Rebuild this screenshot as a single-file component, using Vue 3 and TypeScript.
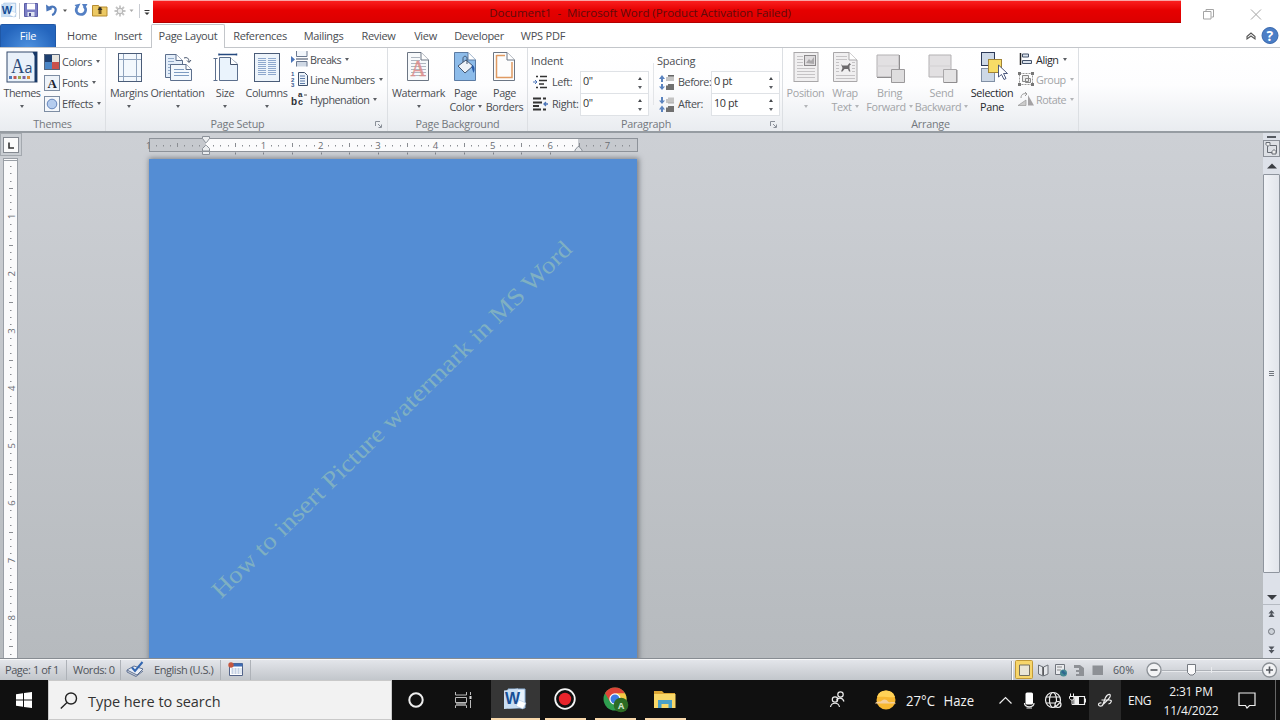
<script setup lang="ts">
interface Glyph { w: number; h: number; body: string }

const sheet = (fill: string, stroke: string) =>
  `<path d="M4.5 1.5H18L25.500 9V29.500H4.500Z" fill="${fill}" stroke="${stroke}"/><path d="M18 1.500V9H25.500" fill="#fff" stroke="${stroke}"/>`
const rows = (x1: number, x2: number, ys: number[], c: string) =>
  `<path d="${ys.map(y => `M${x1} ${y}H${x2}`).join('')}" stroke="${c}" fill="none"/>`

const wordLogo = `<path d="M4 1h17v19H4z" fill="#e8f1fb" stroke="#8fb4dc"/><path d="M0 2.500L14 0.500V20L0 21Z" fill="#c9def3"/><text x="1" y="16" font-family="Liberation Sans" font-size="16" font-weight="700" fill="#174f96" textLength="15" lengthAdjust="spacingAndGlyphs">W</text><path d="M15 12l7 3-3 6-7-3z" fill="#fff" stroke="#a9c4e2" stroke-width=".6"/>`

const glyphs: Record<string, Glyph> = {
  themes: { w: 32, h: 32, body: `<rect x="1" y="1" width="30" height="30" fill="#e9f1fa" stroke="#33486b"/><path d="M26.500 1H31v30h-2.500V5z" fill="#173867"/><text x="5" y="22" font-family="Liberation Serif" font-size="21" fill="#2b4a78" textLength="13" lengthAdjust="spacingAndGlyphs">A</text><text x="18.500" y="22" font-family="Open Sans" font-size="14" fill="#2b4a78" textLength="7.500" lengthAdjust="spacingAndGlyphs">a</text><g><path d="M3 25h3v3H3z" fill="#4d78b8"/><path d="M7.500 25h3v3h-3z" fill="#c2564f"/><path d="M12 25h3v3h-3z" fill="#97a851"/><path d="M16.500 25h3v3h-3z" fill="#7b63a0"/><path d="M21 25h3v3h-3z" fill="#d98c3c"/></g>` },
  colors: { w: 16, h: 16, body: `<path d="M0 0h8v8H0z" fill="#1e3f70"/><path d="M8 0h8v8H8z" fill="#e6e4de"/><path d="M0 8h8v8H0z" fill="#4b86c6"/><path d="M8 8h8v8H8z" fill="#c9504c"/><path d="M.5.5h15v15H.5z" fill="none" stroke="#56657c"/>` },
  fonts: { w: 16, h: 16, body: `<rect x=".5" y=".5" width="15" height="15" fill="#eef3f9" stroke="#7d8da3"/><text x="3.500" y="13" font-family="Liberation Serif" font-size="13" font-weight="700" fill="#1c2430">A</text>` },
  effects: { w: 16, h: 16, body: `<rect x=".5" y=".5" width="15" height="15" fill="#f4f7fb" stroke="#7d8da3"/><circle cx="8" cy="8" r="4.800" fill="#b4ccee" stroke="#6485bb"/>` },
  margins: { w: 32, h: 32, body: `<rect x="5.500" y="2.500" width="23" height="28" fill="#f3f8fd" stroke="#4a5c78"/><path d="M10.500 3v27M23.500 3v27M6 8.500h22M6 25.500h22" stroke="#8fa3bd" fill="none"/>` },
  orientation: { w: 32, h: 32, body: `<path d="M3.500 3.500H14L20.500 9.500V26.500H3.500Z" fill="#e4eefa" stroke="#5c6f8d"/><path d="M14 3.500V9.500H20.500" fill="#fff" stroke="#5c6f8d"/>${rows(6, 12, [7.5, 10.5], '#93abc9')}${rows(6, 17, [13.5, 16.5, 19.5, 22.5], '#93abc9')}<path d="M8.500 13.500H24L29.500 18.500V29.500H8.500Z" fill="#f3f8fd" stroke="#5c6f8d"/><path d="M24 13.500V18.500H29.500" fill="#fff" stroke="#5c6f8d"/>${rows(12, 22, [18.5], '#7d9bc1')}${rows(12, 27, [21.5, 24.5], '#7d9bc1')}<path d="M22 7c3-1 5 0 5 4M25 9.500l2 2 2-2.500" fill="none" stroke="#44536b"/>` },
  size: { w: 32, h: 32, body: `<path d="M10.500 6.500H21L28.500 13V29.500H10.500Z" fill="#eaf3fc" stroke="#5c6f8d"/><path d="M21.500 6.500V13.500H28.500" fill="#fff" stroke="#44536b"/><path d="M10 3.500H28M10 2.500v2M27.500 2.500v2" stroke="#25497f" fill="none" stroke-width="1.500"/><path d="M6.500 7V30M4.500 7.500h4M4.500 29.500h4" stroke="#5c6f8d" fill="none"/>` },
  columns: { w: 32, h: 32, body: `<rect x="3.500" y="2.500" width="25" height="28" fill="#edf4fb" stroke="#4a5c78"/>${rows(7, 15, [7.5, 9.5, 11.5, 13.5, 15.5, 17.5, 19.5, 21.5, 23.5], '#8ea8cd')}${rows(17, 25, [7.5, 9.5, 11.5, 13.5, 15.5, 17.5, 19.5, 21.5, 23.5], '#8ea8cd')}` },
  breaks: { w: 17, h: 16, body: `<path d="M0 5v7l4-3.500z" fill="#4a74b8"/><path d="M5.500 0v5.500h10.500V0" fill="#f2f6fb" stroke="#6b7990"/><path d="M5.500 15.500v-5h10.500v5" fill="#cfd8e4" stroke="#6b7990"/><path d="M5 8h12" stroke="#34435d"/>` },
  lines: { w: 17, h: 16, body: `<g font-family="Liberation Sans" font-size="6" font-weight="700" fill="#34568d"><text x="0" y="5">1</text><text x="0" y="10.500">2</text><text x="0" y="16">3</text></g><path d="M7.500 1.500h6l3 3v10h-9z" fill="#edf4fb" stroke="#3d4f6b"/>${rows(9, 14, [5, 7.5, 10, 12.5], '#5e7ba8')}` },
  hyphen: { w: 17, h: 16, body: `<g font-family="Liberation Sans" font-weight="700" fill="#2c2f36"><text x="0" y="14" font-size="10">b</text><text x="7" y="6" font-size="8">a</text><text x="7" y="14" font-size="9">c</text></g><path d="M13 4h3" stroke="#555"/>` },
  watermark: { w: 32, h: 32, body: `${sheet('#f7f9fb', '#6c7684')}${rows(8, 17, [6.5, 9.5], '#aeb6c0')}${rows(8, 23, [12.5, 15.5, 18.5, 21.5, 24.5], '#aeb6c0')}<text x="7.500" y="24.500" font-family="Liberation Serif" font-size="23" fill="#dd8c8a" stroke="#dd8c8a" stroke-width=".4" fill-opacity=".85" textLength="15" lengthAdjust="spacingAndGlyphs">A</text>` },
  pagecolor: { w: 32, h: 32, body: `${sheet('#8dbcea', '#5b7ba3')}<path d="M8 15l8-6 7 6-8 7z" fill="#eef3f8" stroke="#41546f"/><path d="M13 11V7.500c0-3 4-3 4 0V13" fill="none" stroke="#41546f"/><path d="M22 14c3 1 3 5 1.500 8l-2-6z" fill="#2a5ca8"/>` },
  borders: { w: 32, h: 32, body: `${sheet('#fdfdfd', '#6c7684')}<path d="M7.500 4.500h8.500M23 11v15.500H7.500V4" fill="none" stroke="#e09a62" stroke-width="1.500"/>` },
  indentLeft: { w: 15, h: 14, body: `<path d="M0 7h4M2 5l2 2-2 2" stroke="#4a74b8" fill="none"/><path d="M3 1.500h2M7 1.500h7M6 5.500h8M6 9h5M3 12.500h2M7 12.500h7" stroke="#333" stroke-width="1.600"/>` },
  indentRight: { w: 15, h: 14, body: `<path d="M0 1.500h8M10 1.500h3M0 5.500h9M0 9h6M0 12.500h8M10 12.500h3" stroke="#333" stroke-width="1.800"/><path d="M15 7h-4M13 5l-2 2 2 2" stroke="#4a74b8" fill="none" stroke-width="1.300"/>` },
  before: { w: 15, h: 15, body: `<path d="M3 0l3 4H4v3H2V4H0zM3 15l3-3.500H4V9H2v2.500H0z" fill="#5a83bf"/><path d="M7 2h2V.5h6V6H7z" fill="#c4c4c4"/><path d="M9 .8h6" stroke="#333"/><path d="M7 10.500h2V9h6v6H7z" fill="#707070"/>` },
  after: { w: 15, h: 15, body: `<path d="M3 7l3-3.500H4V0H2v3.500H0zM3 8.500l3 4H4V15H2v-2.500H0z" fill="#5a83bf"/><path d="M7 2h2V.5h6V6H7z" fill="#c4c4c4"/><path d="M9 6h6" stroke="#aaa"/><path d="M7 10.500h2V9h6v6H7z" fill="#707070"/>` },
  position: { w: 32, h: 32, body: `<rect x="4" y="1.500" width="24" height="29" fill="#f0eff0" stroke="#a9a7a9"/>${rows(7, 13, [5.5, 8.5, 11.500, 14.5], '#c5c3c5')}${rows(7, 25, [17.5, 20.5, 23.5, 26.5], '#c5c3c5')}<rect x="14.500" y="4.500" width="11" height="10" fill="#dedcde" stroke="#8b898b"/><path d="M16 12l3-4 2 2 3-4v7z" fill="#aaa8aa"/>` },
  wrap: { w: 32, h: 32, body: `<path d="M4.500 1.500H20L28 9V30.500H4.500Z" fill="#f0eff0" stroke="#a9a7a9"/><path d="M20 1.500V9H28" fill="#fff" stroke="#a9a7a9"/>${rows(7, 18, [5.5, 8.5], '#c5c3c5')}${rows(7, 10, [11.5, 14.5, 17.5, 20.5], '#c5c3c5')}${rows(23, 26, [11.5, 14.5, 17.5, 20.5], '#c5c3c5')}${rows(7, 26, [24.5, 27.5], '#c5c3c5')}<path d="M12 13l1.500 1.500h5l2-2.500 1.500 1.500-1.500 1v3l1 3h-1.500l-1-2.500h-3.500l-2 2.500h-1.500l1.500-3.500z" fill="#6c6a6c"/>` },
  bring: { w: 32, h: 32, body: `<path d="M3 4h22v22H3z" fill="#e2e0e2" stroke="#b3b1b3"/><path d="M3 15h22" stroke="#d2d0d2"/><path d="M3 26.500h22.500V4" fill="none" stroke="#8f8d8f"/><path d="M17.500 18.500h13v13h-13z" fill="#deddde" stroke="#9b999b"/>` },
  send: { w: 32, h: 32, body: `<path d="M3 4h22v22H3z" fill="#e2e0e2" stroke="#b3b1b3"/><path d="M3 15h22" stroke="#d2d0d2"/><path d="M17.500 18.500h13v13h-13z" fill="#e4e3e4" stroke="#aaa8aa"/><path d="M31 19v12.500H18" fill="none" stroke="#8f8d8f"/>` },
  selection: { w: 32, h: 32, body: `<rect x="5.500" y="1.500" width="13" height="13" fill="#cdd8e6" stroke="#2d3a58"/><rect x="5.500" y="17.500" width="13" height="13" fill="#cdd8e6" stroke="#8190a5"/><rect x="12.500" y="8.500" width="13" height="13" fill="#f7dc66" stroke="#a18336"/><path d="M22.500 14v12l3-2.500 2.500 5 2-1-2.500-5h4z" fill="#fff" stroke="#3c4a72" stroke-width=".9"/>` },
  align: { w: 16, h: 16, body: `<path d="M2.500 2v12" stroke="#222" stroke-width="1.500"/><path d="M4.500 3h6v3h-6zM4.500 9.500h9v3h-9z" fill="#dbe3ed" stroke="#44536b"/>` },
  group: { w: 16, h: 16, body: `<path d="M1.500 2.500h13v11h-13z" fill="none" stroke="#999" stroke-dasharray="2 1"/><path d="M4.500 4.500h6v6h-6zM7.500 7.500h5v4h-5z" fill="#ececec" stroke="#888"/><path d="M0 1h3v3H0zM13 1h3v3h-3zM0 12h3v3H0zM13 12h3v3h-3z" fill="#777"/>` },
  rotate: { w: 16, h: 16, body: `<path d="M0 14.500L8 9v5.500z" fill="#ccc" stroke="#999" stroke-width=".7"/><path d="M10 14.500V4l6 10.500z" fill="#a4a2a4"/><path d="M3 7c0-4 3-5 6-4M7 1l2 2-2 2" fill="none" stroke="#999"/>` },
}

interface Big { g: string; l1: string; l2?: string; arrow?: boolean; cls: string }
interface Small { g: string; t: string; cls?: string }

const setup: Big[] = [
  { g: 'margins', l1: 'Margins', arrow: true, cls: 'w42' },
  { g: 'orientation', l1: 'Orientation', arrow: true, cls: 'w55' },
  { g: 'size', l1: 'Size', arrow: true, cls: 'w40' },
  { g: 'columns', l1: 'Columns', arrow: true, cls: 'w43' },
]
const background: Big[] = [
  { g: 'watermark', l1: 'Watermark', arrow: true, cls: 'w57' },
  { g: 'pagecolor', l1: 'Page', l2: 'Color', arrow: true, cls: 'w37' },
  { g: 'borders', l1: 'Page', l2: 'Borders', cls: 'w41' },
]
const arrange: Big[] = [
  { g: 'position', l1: 'Position', arrow: true, cls: 'w41 off' },
  { g: 'wrap', l1: 'Wrap', l2: 'Text', arrow: true, cls: 'w38 off' },
  { g: 'bring', l1: 'Bring', l2: 'Forward', arrow: true, cls: 'w51 off' },
  { g: 'send', l1: 'Send', l2: 'Backward', arrow: true, cls: 'w53 off' },
  { g: 'selection', l1: 'Selection', l2: 'Pane', cls: 'w48 dark' },
]
const themeSmall: Small[] = [{ g: 'colors', t: 'Colors' }, { g: 'fonts', t: 'Fonts' }, { g: 'effects', t: 'Effects' }]
const setupSmall: Small[] = [{ g: 'breaks', t: 'Breaks' }, { g: 'lines', t: 'Line Numbers' }, { g: 'hyphen', t: 'Hyphenation' }]
const arrangeSmall: Small[] = [{ g: 'align', t: 'Align', cls: 'dark' }, { g: 'group', t: 'Group', cls: 'off' }, { g: 'rotate', t: 'Rotate', cls: 'off' }]
const indent = [{ g: 'indentLeft', t: 'Left:', v: '0"' }, { g: 'indentRight', t: 'Right:', v: '0"' }]
const spacing = [{ g: 'before', t: 'Before:', v: '0 pt' }, { g: 'after', t: 'After:', v: '10 pt' }]
const tabs = [
  { t: 'Home', c: 't1' }, { t: 'Insert', c: 't2' }, { t: 'Page Layout', c: 't3 active' }, { t: 'References', c: 't4' },
  { t: 'Mailings', c: 't5' }, { t: 'Review', c: 't6' }, { t: 'View', c: 't7' }, { t: 'Developer', c: 't8' }, { t: 'WPS PDF', c: 't9' },
]

// Ruler marks: one every eighth of an inch at 60% zoom.
const inch = 57.35
const mark = (from: number, to: number) =>
  Array.from({ length: to - from + 1 }, (_, i) => {
    const n = from + i
    return { n, at: (n * inch) / 8, kind: n === 0 ? 'zero' : n % 8 === 0 ? 'num' : n % 4 === 0 ? 'half' : 'dot', label: Math.abs(n / 8) }
  }).filter(m => m.kind !== 'zero')
const hMarks = mark(-8, 59)
const vMarks = mark(1, 69)
const stops = Array.from({ length: 12 }, (_, i) => ((i + 1) * inch) / 2)
</script>

<template>
  <div class="screen">
    <header class="title">
      <div class="quick">
        <svg width="152" height="24" fill="none">
          <g transform="translate(1 2.500) scale(.7)" v-html="wordLogo" />
          <path d="M19.500 3v16M139.500 4v14" stroke="#c9ccd2" />
          <path d="M24.500 3.500h13v13h-13z" fill="#7b7ec4" stroke="#5a5ca6" /><path d="M27 3.500h8v6h-8z" fill="#fff" /><path d="M27.500 12h7v4.500h-7z" fill="#dfe4f1" /><path d="M29 13h2v3h-2z" fill="#4b4d91" />
          <path d="M48.500 8.500c4-4 8-1 7 2.500-.4 1.500-1.500 3.500-3.500 4" stroke="#4a76ba" stroke-width="2.200" /><path d="M46 4.500l.5 7 6-2.500z" fill="#4a76ba" />
          <path d="M63 9.500h4l-2 2.500z" fill="#555" />
          <path d="M77.500 6.500c-3 4-.5 8 3.500 8s6.500-5 3-8" stroke="#5480c4" stroke-width="2.600" /><path d="M82 4h5.500l-3 5zM80.500 3.500l-2.500 5-3.500-3.500z" fill="#5480c4" />
          <path d="M92.500 5.500h6l1 1.500h7.500v9h-14.500z" fill="#ecc963" stroke="#b68b31" /><path d="M98.500 7h3v7h-3z" fill="#70551f" /><path d="M100 7l2.500 3h-5z" fill="#2d2d2d" />
          <g stroke="#c4c4c4" stroke-width="1.800"><path d="M120 5.500v11M114.500 11h11M116 7l8 8M124 7l-8 8" /></g><circle cx="120" cy="11" r="2.800" fill="#eee" stroke="#b5b5b5" />
          <path d="M129.500 9.500h4l-2 2.500z" fill="#aaa" />
          <path d="M144.500 10.500h5" stroke="#333" /><path d="M144.500 12.500h5l-2.500 2.500z" fill="#333" />
        </svg>
      </div>
      <div class="caption">Document1&nbsp; -&nbsp; Microsoft Word (Product Activation Failed)</div>
      <svg class="winctl" width="99" height="24" fill="none" stroke="#a4a4a4">
        <path d="M22.500 11.500h7.500v7.500h-7.500zM25 11v-1.500h7.500v7.500h-2" /><path d="M70 9.500l10 10M80 9.500l-10 10" />
      </svg>
    </header>

    <nav class="tabs">
      <div class="file">File</div>
      <div v-for="t in tabs" :key="t.t" class="tab" :class="t.c"><span>{{ t.t }}</span></div>
      <svg class="help" width="40" height="23" fill="none">
        <path d="M7 12.500l4-3.500 4 3.500v2.500l-4-3-4 3z" stroke="#555" stroke-width="1.100" />
        <circle cx="30" cy="11.500" r="8" fill="#4b7ec6" stroke="#3a69ad" />
        <text x="26.500" y="16.500" font-size="14" font-weight="700" fill="#fff">?</text>
      </svg>
    </nav>

    <section class="ribbon">
      <div class="grp g1">
        <div class="body">
          <div class="big w42 first">
            <svg width="32" height="32" v-html="glyphs.themes.body" />
            <span class="l1">Themes</span><span class="l2"><i class="dn" /></span>
          </div>
          <div class="stack themes">
            <div v-for="s in themeSmall" :key="s.t" class="small"><svg width="16" height="16" v-html="glyphs[s.g].body" /><span>{{ s.t }}</span><i class="dn" /></div>
          </div>
        </div>
        <div class="name">Themes</div>
      </div>

      <div class="grp g2">
        <div class="body">
          <div v-for="b in setup" :key="b.g" class="big" :class="b.cls">
            <svg width="32" height="32" v-html="glyphs[b.g].body" /><span class="l1">{{ b.l1 }}</span><span class="l2"><i class="dn" /></span>
          </div>
          <div class="stack setup">
            <div v-for="s in setupSmall" :key="s.t" class="small"><svg width="17" height="16" v-html="glyphs[s.g].body" /><span>{{ s.t }}</span><i class="dn" /></div>
          </div>
        </div>
        <div class="name">Page Setup<svg class="launch" width="7" height="7" fill="none" stroke="#8a9099"><path d="M.5 5V.5H5M3 3l3 3M6.500 3.500v3h-3" /></svg></div>
      </div>

      <div class="grp g3">
        <div class="body">
          <div v-for="b in background" :key="b.g" class="big" :class="b.cls">
            <svg width="32" height="32" v-html="glyphs[b.g].body" /><span class="l1">{{ b.l1 }}</span>
            <span class="l2">{{ b.l2 }}<i v-if="b.arrow" class="dn" /></span>
          </div>
        </div>
        <div class="name">Page Background</div>
      </div>

      <div class="grp g4">
        <div class="body">
          <div class="para">
            <h4>Indent</h4>
            <div v-for="f in indent" :key="f.t" class="field ind">
              <svg width="15" height="15" v-html="glyphs[f.g].body" /><label>{{ f.t }}</label>
              <div class="box">{{ f.v }}<span class="spin"><i class="up" /><i class="dn" /></span></div>
            </div>
          </div>
          <div class="rule" />
          <div class="para">
            <h4>Spacing</h4>
            <div v-for="f in spacing" :key="f.t" class="field spc">
              <svg width="15" height="15" v-html="glyphs[f.g].body" /><label>{{ f.t }}</label>
              <div class="box">{{ f.v }}<span class="spin"><i class="up" /><i class="dn" /></span></div>
            </div>
          </div>
        </div>
        <div class="name">Paragraph<svg class="launch" width="7" height="7" fill="none" stroke="#8a9099"><path d="M.5 5V.5H5M3 3l3 3M6.500 3.500v3h-3" /></svg></div>
      </div>

      <div class="grp g5">
        <div class="body">
          <div v-for="b in arrange" :key="b.g" class="big" :class="b.cls">
            <svg width="32" height="32" v-html="glyphs[b.g].body" /><span class="l1">{{ b.l1 }}</span>
            <span class="l2">{{ b.l2 }}<i v-if="b.arrow" class="dn" /></span>
          </div>
          <div class="stack arr">
            <div v-for="s in arrangeSmall" :key="s.t" class="small" :class="s.cls"><svg width="16" height="16" v-html="glyphs[s.g].body" /><span>{{ s.t }}</span><i class="dn" /></div>
          </div>
        </div>
        <div class="name">Arrange</div>
      </div>
    </section>

    <main class="work">
      <div class="left">
        <div class="tabsel"><div><svg width="14" height="14"><path d="M5 4.500v5.500h5" fill="none" stroke="#333" stroke-width="1.600" /></svg></div></div>
        <div class="vruler">
          <svg width="14" height="500">
            <g v-for="m in vMarks" :key="m.n">
              <text v-if="m.kind === 'num'" :transform="`translate(10.500 ${m.at}) rotate(-90)`" text-anchor="middle" class="rnum">{{ m.label }}</text>
              <path v-else-if="m.kind === 'half'" :d="`M5 ${Math.round(m.at)}.5h4`" stroke="#8a8d92" />
              <rect v-else x="6" :y="Math.round(m.at)" width="1.500" height="1" fill="#8a8d92" />
            </g>
          </svg>
        </div>
      </div>

      <div class="canvas">
        <svg class="hruler" width="489" height="20">
          <rect x=".5" y="5.500" width="488" height="13" fill="#c6c9ce" stroke="#8d9299" />
          <rect x="57" y="6" width="372" height="12" fill="#fbfbfc" />
          <g transform="translate(57 0)">
            <g v-for="m in hMarks" :key="m.n">
              <text v-if="m.kind === 'num'" :x="m.at" y="15.500" text-anchor="middle" class="rnum">{{ m.label }}</text>
              <rect v-else-if="m.kind === 'half'" :x="Math.round(m.at)" y="10" width="1" height="4" fill="#8a8d92" />
              <rect v-else :x="Math.round(m.at)" y="12" width="1" height="1.500" fill="#8a8d92" />
            </g>
            <rect v-for="s in stops" :key="s" :x="Math.round(s)" y="19.500" width="1" height="2" fill="#7b7f86" />
            <path d="M-3.500 3.500h7v2L.5 9.500h-1l-3-4zM-3.500 18v-2.500l3-3h1l3 3V18zM-3.500 18.500h7v3h-7z" fill="#eceef0" stroke="#8b9199" />
            <path d="M369 18.500v-1.500l3-3.500h1l3 3.500v1.500z" fill="#e4e6e9" stroke="#8b9199" />
          </g>
        </svg>
        <div class="page">
          <svg width="487" height="500">
            <text class="wm" transform="translate(72 440.500) rotate(-44.700)" textLength="496" lengthAdjust="spacingAndGlyphs">How to insert Picture watermark in MS Word</text>
          </svg>
        </div>
      </div>

      <div class="scroll">
        <div class="split" />
        <div class="rtoggle"><svg width="15" height="15" fill="none" stroke="#666b73"><path d="M3.500 3.500v8h5M6 4.500h6.500v7h-2" /><path d="M2 1.500h4v2l-2 2-2-2zM8 13v-2.500l2-2 2 2V13z" fill="#eee" /></svg></div>
        <div class="sbtn"><svg width="10" height="6"><path d="M0 5.500L5 .5l5 5z" fill="#3a3d42" /></svg></div>
        <div class="thumb"><i /><i /><i /></div>
        <div class="sbtn dnb"><svg width="10" height="6"><path d="M0 0h10L5 5z" fill="#3a3d42" /></svg></div>
        <svg class="browse" width="17" height="54" fill="none">
          <path d="M5.500 12L8.500 8l3 4zM5.500 8.500L8.500 5l3 3.500z" fill="#50555d" />
          <circle cx="8.500" cy="26.500" r="3" fill="#ccd1d8" stroke="#70757d" />
          <path d="M5.500 41.500l3 3.500 3-3.500zM5.500 45l3 3.500 3-3.500zM5.500 41h6" fill="#50555d" />
        </svg>
      </div>
    </main>

    <footer class="status">
      <div class="st s1">Page: 1 of 1</div>
      <div class="st s2">Words: 0</div>
      <div class="st s3">
        <svg width="19" height="16" fill="none"><path d="M1 9l7-4 9 3-6 6z" fill="#e9eef6" stroke="#607396" /><path d="M1 9v2l9 4.500 7-5.500" stroke="#607396" /><path d="M6 6.500l3 3.500 7.500-9" stroke="#3266b1" stroke-width="2" /></svg>
        <span>English (U.S.)</span>
      </div>
      <div class="st s4">
        <svg width="16" height="15"><path d="M1.500 1.500h13v12h-13z" fill="#fff" stroke="#53648a" /><path d="M1.500 1.500h13v3h-13z" fill="#3e6bb3" /><path d="M3.500 7h10M3.500 9h10M3.500 11h10" stroke="#8ba4cb" stroke-dasharray="2 1" /><circle cx="3" cy="3" r="2.700" fill="#c5573f" /></svg>
      </div>
      <div class="grow" />
      <svg class="views" width="269" height="21" fill="none">
        <path d="M.5 1v19" stroke="#9aa0a8" /><path d="M1.500 1v19" stroke="#fff" />
        <rect x="4.500" y="0.500" width="17" height="18" rx="1" fill="#f7d66b" stroke="#c29a37" /><path d="M8.500 5h10v10.500h-10z" fill="#e9e5d6" stroke="#75705f" />
        <path d="M27.500 5l4.500 2v9l-4.500-2zM37 5l-4.500 2v9l4.500-2z" fill="#e5e7ea" stroke="#6c7178" /><path d="M32 7v8" stroke="#444" />
        <path d="M44.500 4.500h9v10h-9z" fill="#e9ebee" stroke="#70757d" /><path d="M46 7h5M46 10h4" stroke="#888" /><circle cx="52.500" cy="13" r="3.500" fill="#458a92" /><path d="M50 12l2-2 2 2.500 1.500.5-2 2z" fill="#2f6791" />
        <path d="M63 5h6l4 3v8h-8v-2h3v-2h-3v-2h3V8h-5z" fill="#8e9196" />
        <path d="M81.500 5.500h10.500v9.500H81.500z" fill="#8d9095" />
        <text x="102" y="14" font-size="11" fill="#4f545b" textLength="21" lengthAdjust="spacingAndGlyphs">60%</text>
        <path d="M151 10.500h100" stroke="#aeb2b8" /><path d="M151 11.500h100" stroke="#e8eaed" /><path d="M200.500 7v6" stroke="#e9ebee" />
        <circle cx="143" cy="10" r="7" fill="#f2f3f5" stroke="#8b9096" stroke-width="1.300" /><path d="M139.500 10h7" stroke="#55595f" stroke-width="1.600" />
        <circle cx="258.500" cy="10" r="7" fill="#f2f3f5" stroke="#8b9096" stroke-width="1.300" /><path d="M255 10h7M258.500 6.500v7" stroke="#55595f" stroke-width="1.600" />
        <path d="M176.500 4.500h8v8l-2.500 2.500h-3l-2.500-2.500z" fill="#fafafb" stroke="#747980" />
      </svg>
    </footer>

    <div class="taskbar">
      <div class="cell start"><svg width="16" height="16" fill="#fff"><path d="M0 2.200L7 1.200V7.500H0zM8 1l8-1v7.500H8zM0 8.500h7v6.300L0 13.800zM8 8.500h8V16l-8-1z" /></svg></div>
      <div class="search"><svg width="18" height="18" fill="none" stroke="#222" stroke-width="1.400"><circle cx="11" cy="6.500" r="5.500" /><path d="M7 10.500L.8 16.500" /></svg><span>Type here to search</span></div>
      <div class="cell c48"><svg width="16" height="16"><circle cx="8" cy="8" r="6.700" fill="none" stroke="#eee" stroke-width="2" /></svg></div>
      <div class="cell c51"><svg width="18" height="16" fill="none" stroke="#bbb"><path d="M1.500 0v3h11V0M1.500 5.500h11v5h-11zM1.500 16v-2.500h11V16M16.500 0v3M16.500 8v8" /><path d="M15.500 4h2v3h-2z" fill="#ddd" stroke="none" /><path d="M2 11h10v3H2z" fill="#888" stroke="none" /></svg></div>
      <div class="cell app on"><svg width="22" height="22" v-html="wordLogo" /></div>
      <div class="cell app"><svg width="22" height="22"><circle cx="11" cy="11" r="9.800" fill="#111" stroke="#f5f5f5" stroke-width="1.800" /><circle cx="11" cy="11" r="6.200" fill="#e9242b" /></svg></div>
      <div class="cell app">
        <svg width="24" height="24"><circle cx="12" cy="12" r="11.500" fill="#2f9e4f" /><path d="M12 12L2 6.300A11.500 11.500 0 0 1 22 6.300z" fill="#dd4437" /><path d="M12 12L13 6.300H22A11.500 11.500 0 0 1 13.500 23.500z" fill="#f6c844" /><path d="M2 6.300L7.300 15 11.500 6.500z" fill="#dd4437" /><circle cx="12" cy="12" r="5.700" fill="#fff" /><circle cx="12" cy="12" r="4.500" fill="#3d7be2" /><circle cx="18" cy="18" r="7.300" fill="#2d6b23" /><text x="15" y="21.500" font-size="9" font-weight="700" fill="#cfe0c8">A</text></svg>
      </div>
      <div class="cell app"><svg width="22" height="19"><path d="M0 1h8l2 2h11v5H0z" fill="#dca634" /><path d="M0 4h21.500v14H0z" fill="#f9d868" /><path d="M4 18v-8h14v8h-3.500v-4h-7v4z" fill="#4aa0c8" /></svg></div>
      <div class="grow" />
      <svg class="tray" width="293" height="40" fill="none" stroke="#eee" stroke-width="1.200">
        <circle cx="12.500" cy="14.500" r="2.700" /><path d="M8.500 20.500c1-3 6-3.500 7.500 1" /><circle cx="7" cy="19.500" r="2.700" /><path d="M2.500 27c1-5 8-5 9 0" />
        <g stroke="none"><circle cx="58" cy="20" r="9.500" fill="#f7b731" /><path d="M49 17a9.500 9.500 0 0 1 18 0c-4 1-12-1-18 0z" fill="#ffd257" /><path d="M47 23.500c2-3 5-1 7-3s5-1 6 1 6-1 8 2z" fill="#f5cf9b" /></g>
        <path d="M171.500 23.500l6-6 6 6" />
        <rect x="197.500" y="12.500" width="7.500" height="12" rx="1.500" fill="#fff" stroke="none" /><path d="M196.500 23c0 5 9.500 5 9.500 0M198.500 28h5.500" />
        <circle cx="225" cy="20" r="7.500" /><ellipse cx="225" cy="20" rx="3.500" ry="7.500" /><path d="M218 17h14M218 23h10" /><circle cx="230" cy="24.500" r="3" fill="#111" /><path d="M228 26.500l4-4" />
        <path d="M246 16.500h10.500v8H246z" /><path d="M246.500 17h4.500v7h-4.500z" fill="#eee" stroke="none" /><path d="M257.500 18.500v4M242.500 13.500v3M245.500 13.500v3M241.500 16.500h5v2c-1 2-4 2-5 0zM244 20v4.500h2" stroke-width="1" />
        <rect x="261" y="0" width="32" height="40" fill="#292929" stroke="none" /><path d="M273.500 23c-4-1-4 4 0 3 3-1 2-8 6-11 3-2 4 1 1 4l-5 5M273.500 20h8c3 0 2 3-1 4" />
        <text x="78" y="26" font-size="14.500" class="lt" textLength="29" lengthAdjust="spacingAndGlyphs">27°C</text>
        <text x="115.500" y="26" font-size="14.500" class="lt" textLength="30.500" lengthAdjust="spacingAndGlyphs">Haze</text>
      </svg>
      <div class="lang">ENG</div>
      <div class="clock"><span>2:31 PM</span><span>11/4/2022</span></div>
      <div class="note"><svg width="18" height="17" fill="none" stroke="#eee" stroke-width="1.200"><path d="M1 1h16v12.500h-5.500L9 16l-1.500-2.500H1z" /></svg></div>
      <div class="peek" />
    </div>
  </div>
</template>

<style>
html, body { overflow: hidden; background: #fff; }
</style>

<style scoped>
.screen { width: 1280px; height: 720px; display: flex; flex-direction: column; overflow: hidden; font-family: "Open Sans", "Noto Sans", sans-serif; font-size: 11px; color: #4a4d52; background: #fff; }
.screen * { box-sizing: border-box; }
svg { flex: none; overflow: visible; display: block; }
.grow { flex: 1; }

.title { height: 24px; display: flex; flex: none; }
.quick { width: 153px; }
.caption { width: 1028px; height: 23px; border-top: 1px solid #f9a5a5; border-bottom: 1px solid #b20000; background: linear-gradient(#fa1f1f, #e60000 45%, #dc0000); color: #5e0c0c; text-align: center; line-height: 23px; font-size: 11.500px; letter-spacing: -.04px; padding-right: 54px; white-space: pre; }

.tabs { height: 24px; flex: none; display: flex; border-bottom: 1px solid #c3c6ca; }
.file { width: 56px; height: 23px; background: radial-gradient(ellipse at 50% 110%, #4f93e0, #2465bd 75%); border: 1px solid #2058a6; border-bottom: 0; border-radius: 2px 2px 0 0; color: #fff; text-align: center; line-height: 22px; font-weight: 500; letter-spacing: -.2px; }
.tab { height: 24px; display: flex; justify-content: center; line-height: 24px; white-space: nowrap; letter-spacing: -.33px; }
.t1 { width: 50px; padding-left: 2px; }
.t2 { width: 44px; margin-right: 1px; }
.t3 { width: 74px; }
.t4 { width: 70px; }
.t5 { width: 57px; }
.t6 { width: 53px; }
.t7 { width: 41px; }
.t8 { width: 66px; }
.t9 { width: 62px; letter-spacing: -.2px; }
.active { border: 1px solid #c3c6ca; border-bottom: 0; background: #fff; line-height: 22px; border-radius: 2px 2px 0 0; }
.help { margin-left: auto; }

.ribbon { height: 85px; flex: none; display: flex; font-size: 10.800px; letter-spacing: -.35px; background: linear-gradient(#fff, #fdfdfe 45%, #e9ecf0); border-bottom: 2px solid #969ca2; }
.grp { height: 83px; display: flex; flex: none; flex-direction: column; border-right: 1px solid #dcdfe3; }
.g1 { width: 106px; }
.g2 { width: 282px; }
.g3 { width: 140px; }
.g4 { width: 255px; }
.g5 { width: 296px; }
.body { height: 69px; display: flex; }
.g2 .body, .g3 .body, .g5 .body { padding-left: 2px; }
.name { display: flex; justify-content: center; position: relative; height: 14px; line-height: 14px; color: #73777d; letter-spacing: -.25px; }
.g2 .name { padding-right: 18px; }
.g4 .name { padding-right: 18px; }
.launch { position: absolute; right: 5px; top: 4px; }
.big { display: flex; flex: none; flex-direction: column; align-items: center; padding-top: 3px; white-space: nowrap; }
.big.first { padding-left: 2px; letter-spacing: -.45px; }
.big .l1 { height: 14px; line-height: 19px; }
.big .l2 { height: 14px; line-height: 19px; display: flex; align-items: center; gap: 3px; padding-top: 4px; }
.w37 { width: 37px; } .w38 { width: 38px; } .w40 { width: 40px; } .w41 { width: 41px; } .w42 { width: 42px; } .w43 { width: 43px; }
.w48 { width: 48px; } .w51 { width: 51px; } .w53 { width: 53px; } .w55 { width: 55px; } .w57 { width: 57px; }
.off { color: #a2a4a7; }
.dark { color: #26282c; }
.dn { width: 0; height: 0; border: 2.500px solid transparent; border-top: 3px solid #5b5e63; border-bottom: 0; }
.up { width: 0; height: 0; border: 2.500px solid transparent; border-bottom: 3px solid #45484c; border-top: 0; }
.off .dn { border-top-color: #b3b5b8; }
.stack { display: flex; flex: none; flex-direction: column; }
.small { display: flex; align-items: center; gap: 2px; height: 20px; white-space: nowrap; }
.small .dn { margin-left: 2px; }
.themes { padding: 3px 0 0 2px; }
.themes .small { height: 21px; }
.setup { padding: 1px 0 0 3px; letter-spacing: -.52px; }
.arr { padding: 1px 0 0 2px; letter-spacing: -.45px; }
.para { padding: 4px 0 0 3px; width: 125px; }
.rule + .para { width: 127px; }
.rule { width: 1px; height: 42px; margin-top: 15px; background: #e3e5e8; }
h4 { margin: 0; font-weight: 400; font-size: 11px; line-height: 18px; height: 19px; letter-spacing: -.2px; }
.field { display: flex; align-items: center; height: 22px; }
.field svg { margin-left: 2px; margin-right: 4px; }
.field label { padding-bottom: 1px; }
.ind label { width: 28px; }
.spc label { width: 33px; letter-spacing: -.45px; }
.box { flex: none; width: 69px; height: 23px; border: 1px solid #dfe2e6; background: #fff; padding-left: 2px; line-height: 18px; display: flex; color: #333; }
.spin { margin-left: auto; width: 5px; margin-right: 5px; display: flex; flex-direction: column; justify-content: space-between; padding: 5px 0 4px; }

.work { height: 526px; flex: none; display: flex; background: linear-gradient(#cdd0d5, #b6babe); }
.left { width: 22px; }
.tabsel { width: 22px; height: 23px; padding: 3px 2px 2px; border: 1px solid #a4a9af; background: #c9cdd2; }
.tabsel div { width: 16px; height: 16px; background: #fbfbfb; border: 1px solid #858a92; }
.vruler { margin: 2px 0 0 3px; width: 15px; height: 501px; background: #fafafb; border: 1px solid #9a9fa6; border-top: 3px double #9a9fa6; }
.vruler svg { margin-top: -2px; }
.rnum { font-size: 9.500px; fill: #6a6d73; }
.canvas { width: 1241px; padding-left: 127px; overflow: hidden; }
.hruler { height: 25px; }
.page { width: 488px; height: 510px; margin-top: 1px; background: #548dd4; box-shadow: 1px 0 5px 1px rgba(60, 65, 75, .55); }
.wm { font-family: "Liberation Serif", serif; font-size: 24px; fill: #7fb0c2; }
.scroll { width: 17px; flex: none; background: #dde1e9; display: flex; flex-direction: column; }
.split { width: 9px; height: 2px; background: #555a61; margin: 3px 0 2px 4px; }
.rtoggle { height: 17px; width: 17px; border: 1px solid #8b9098; background: #dde0e5; }
.sbtn { height: 17px; display: flex; align-items: center; justify-content: center; }
.thumb { height: 399px; border: 1px solid #8f959e; border-radius: 1px; background: linear-gradient(90deg, #f1f3f7, #e2e5eb); display: flex; flex-direction: column; gap: 1px; align-items: center; justify-content: center; }
.thumb i { width: 5px; height: 1px; background: #71767e; }
.dnb { height: 32px; padding-top: 18px; border-bottom: 1px solid #b5bac2; }

.status { height: 21px; flex: none; display: flex; border-top: 1px solid #f6f7f8; box-shadow: 0 -1px 0 #878c92; position: relative; background: linear-gradient(#e3e5ea, #c2c6cb); line-height: 19px; letter-spacing: -.45px; color: #50545a; }
.views { letter-spacing: normal; }
.st { border-right: 1px solid #aeb2b8; display: flex; align-items: center; white-space: nowrap; padding-bottom: 2px; }
.s1 { width: 67px; padding-left: 5px; }
.s2 { width: 54px; padding-left: 6px; }
.s3 { width: 100px; padding-left: 5px; gap: 9px; }
.s4 { width: 30px; padding-left: 7px; }

.taskbar { height: 40px; flex: none; display: flex; background: #101010; color: #f2f2f2; }
.cell { display: flex; align-items: center; justify-content: center; }
.start { width: 48px; }
.search { width: 344px; background: #f2f2f2; border: 1px solid #c9c9c9; color: #333; display: flex; align-items: center; gap: 10px; padding: 2px 0 0 11px; font-size: 14.500px; letter-spacing: -.05px; }
.c48 { width: 48px; }
.c51 { width: 47px; padding-right: 2px; margin-right: 4px; }
.app { width: 49px; padding-right: 2px; border-bottom: 2px solid #f9d9ac; }
.app:not(.on) { width: 41px; margin: 0 4px 0 5px; }
.on { background: #363636; }
.tray { font-family: "Open Sans", sans-serif; }
.lt { fill: #f2f2f2; stroke: none; }
.lang { width: 37px; text-align: center; line-height: 41px; font-size: 12px; letter-spacing: -.4px; }
.clock { width: 66px; display: flex; flex-direction: column; align-items: center; font-size: 12px; line-height: 19px; padding-top: 2px; letter-spacing: -.2px; }
.note { width: 51px; padding-right: 5px; display: flex; align-items: center; justify-content: center; }
.peek { width: 5px; border-left: 1px solid #666; }
</style>
